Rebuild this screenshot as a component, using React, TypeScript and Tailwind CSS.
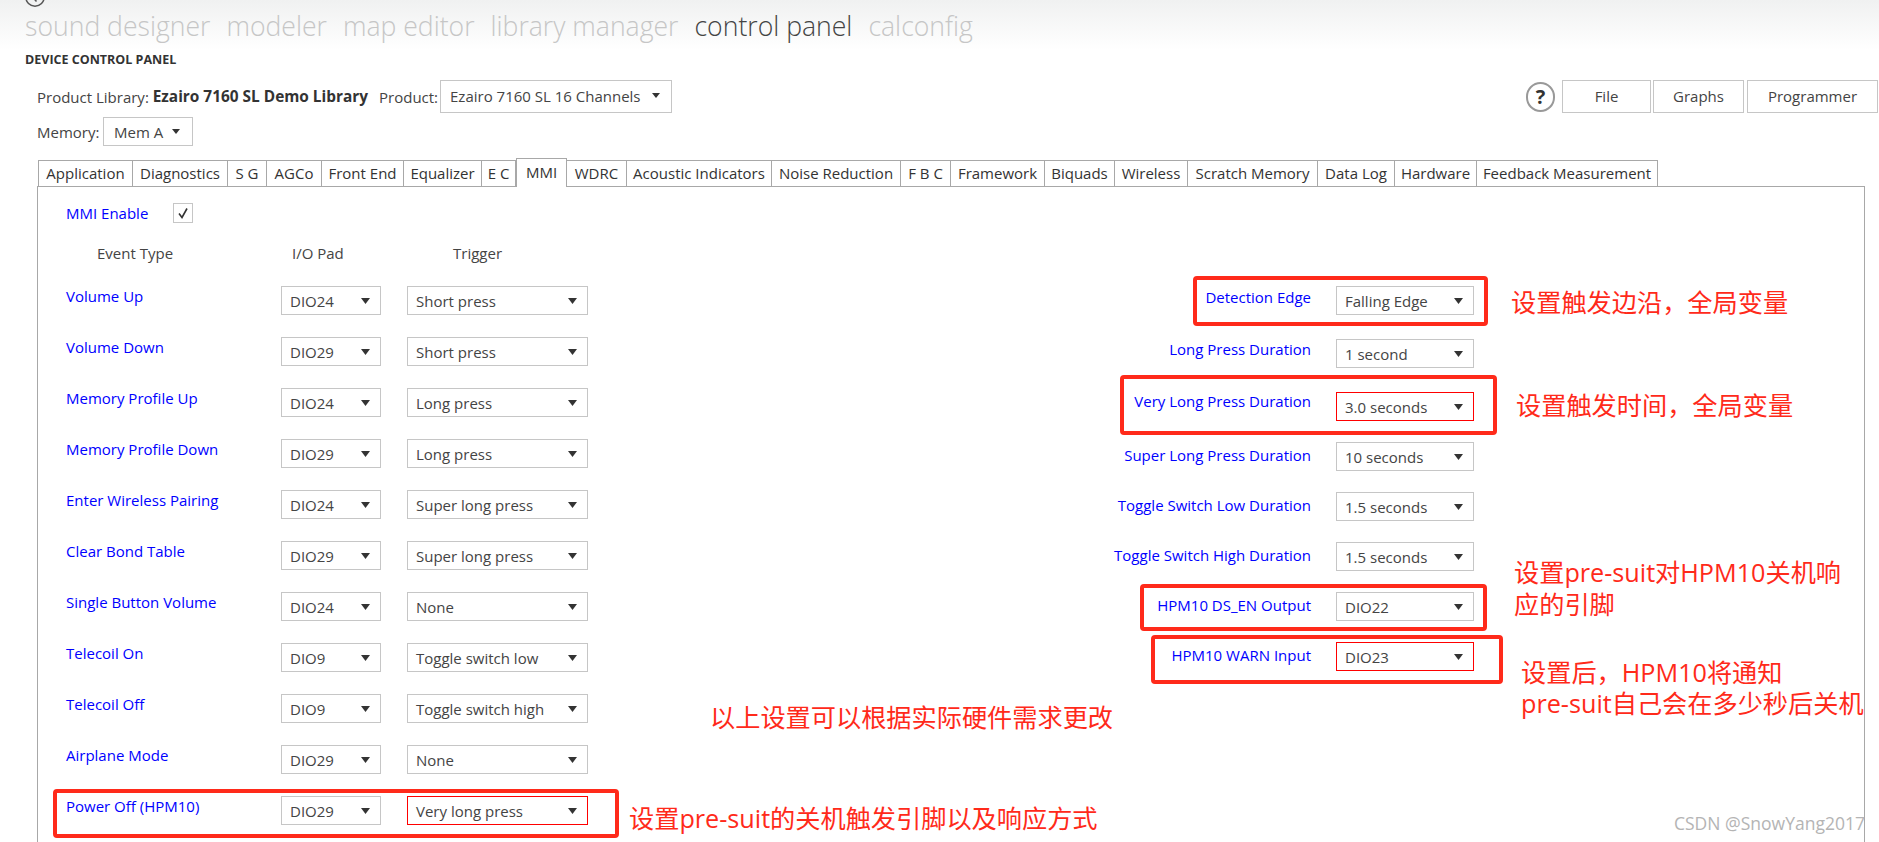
const headerTabs = [
  { label: "sound designer" },
  { label: "modeler" },
  { label: "map editor" },
  { label: "library manager" },
  { label: "control panel", active: true },
  { label: "calconfig" },
];

const tabs = [
  { label: "Application", w: "w-[95px]" },
  { label: "Diagnostics", w: "w-[95px]" },
  { label: "S G", w: "w-[39px]" },
  { label: "AGCo", w: "w-[55px]" },
  { label: "Front End", w: "w-[82px]" },
  { label: "Equalizer", w: "w-[78px]" },
  { label: "E C", w: "w-[34px]" },
  { label: "MMI", w: "w-[51px]", active: true },
  { label: "WDRC", w: "w-[60px]" },
  { label: "Acoustic Indicators", w: "w-[145px]" },
  { label: "Noise Reduction", w: "w-[129px]" },
  { label: "F B C", w: "w-[50px]" },
  { label: "Framework", w: "w-[94px]" },
  { label: "Biquads", w: "w-[70px]" },
  { label: "Wireless", w: "w-[73px]" },
  { label: "Scratch Memory", w: "w-[130px]" },
  { label: "Data Log", w: "w-[77px]" },
  { label: "Hardware", w: "w-[82px]" },
  { label: "Feedback Measurement", w: "w-[181px]" },
];

const events = [
  { label: "Volume Up", pad: "DIO24", trigger: "Short press" },
  { label: "Volume Down", pad: "DIO29", trigger: "Short press" },
  { label: "Memory Profile Up", pad: "DIO24", trigger: "Long press" },
  { label: "Memory Profile Down", pad: "DIO29", trigger: "Long press" },
  { label: "Enter Wireless Pairing", pad: "DIO24", trigger: "Super long press" },
  { label: "Clear Bond Table", pad: "DIO29", trigger: "Super long press" },
  { label: "Single Button Volume", pad: "DIO24", trigger: "None" },
  { label: "Telecoil On", pad: "DIO9", trigger: "Toggle switch low" },
  { label: "Telecoil Off", pad: "DIO9", trigger: "Toggle switch high" },
  { label: "Airplane Mode", pad: "DIO29", trigger: "None" },
  { label: "Power Off (HPM10)", pad: "DIO29", trigger: "Very long press", changed: true },
];

const globals = [
  { label: "Detection Edge", value: "Falling Edge", gap: "mb-[24px]", lift: "pb-[8px]" },
  { label: "Long Press Duration", value: "1 second", gap: "mb-[24px]", lift: "pb-[10px]" },
  { label: "Very Long Press Duration", value: "3.0 seconds", gap: "mb-[21px]", lift: "pb-[11px]", changed: true },
  { label: "Super Long Press Duration", value: "10 seconds", gap: "mb-[21px]", lift: "pb-[4px]" },
  { label: "Toggle Switch Low Duration", value: "1.5 seconds", gap: "mb-[21px]", lift: "pb-[4px]" },
  { label: "Toggle Switch High Duration", value: "1.5 seconds", gap: "mb-[21px]", lift: "pb-[4px]" },
  { label: "HPM10 DS_EN Output", value: "DIO22", gap: "mb-[21px]", lift: "pb-[4px]" },
  { label: "HPM10 WARN Input", value: "DIO23", gap: "mb-[21px]", lift: "pb-[4px]", changed: true },
];

const redBoxes = [
  "left-[53px] top-[789px] w-[566px] h-[49px]",
  "left-[1193px] top-[276px] w-[295px] h-[50px]",
  "left-[1120px] top-[375px] w-[377px] h-[60px]",
  "left-[1140px] top-[584px] w-[347px] h-[47px]",
  "left-[1151px] top-[635px] w-[352px] h-[49px]",
];

const notes = [
  { text: "设置触发边沿\uFF0C全局变量", pos: "left-[1511px] top-[284px]" },
  { text: "设置触发时间\uFF0C全局变量", pos: "left-[1516px] top-[387px]" },
  { text: "设置pre-suit对HPM10关机响", pos: "left-[1514px] top-[554px]" },
  { text: "应的引脚", pos: "left-[1514px] top-[586px]" },
  { text: "设置后\uFF0CHPM10将通知", pos: "left-[1521px] top-[654px]" },
  { text: "pre-suit自己会在多少秒后关机", pos: "left-[1521px] top-[685px]" },
  { text: "以上设置可以根据实际硬件需求更改", pos: "left-[710px] top-[699px]" },
  { text: "设置pre-suit的关机触发引脚以及响应方式", pos: "left-[629px] top-[800px]" },
];

function Arrow() {
  return (
    <svg width="9" height="6" viewBox="0 0 9 6" className="shrink-0">
      <polygon points="0,0 9,0 4.5,6" fill="#333" />
    </svg>
  );
}

function Select({
  value,
  width,
  changed,
}: {
  value: string;
  width: string;
  changed?: boolean;
}) {
  return (
    <div
      className={`${width} flex h-[29px] shrink-0 items-center justify-between border bg-white pl-[8px] pr-[10px] text-[#444] ${
        changed ? "border-[#ff0000]" : "border-[#c6c6c6]"
      }`}
    >
      <span>{value}</span>
      <Arrow />
    </div>
  );
}

function App() {
  return (
    <div className="relative h-[842px] w-[1879px] overflow-hidden bg-white font-['Open_Sans','Noto_Sans_CJK_SC',sans-serif] text-[15px] leading-[20px] text-[#444]">
      {/* top nav */}
      <div className="relative h-[50px] bg-gradient-to-b from-[#f0f1f1] to-white pl-[25px] pt-[10px]">
        <svg
          className="absolute left-[25px] top-[-13px]"
          width="20"
          height="20"
          viewBox="0 0 20 20"
          fill="none"
          stroke="#555"
          strokeWidth="1.5"
        >
          <circle cx="10" cy="10" r="9.2" />
          <path d="M11.5 14.5 L7.5 10 L11.5 5.5" />
        </svg>
        <div className="flex gap-[16px] text-[26.6px] font-light leading-[32px]">
          {headerTabs.map((t) => (
            <span key={t.label} className={t.active ? "text-[#444]" : "text-[#c6c6c6]"}>
              {t.label}
            </span>
          ))}
        </div>
      </div>

      <div className="h-[30px] pl-[25px] pt-[1px] text-[12.5px] font-bold leading-[18px] text-[#333]">
        DEVICE CONTROL PANEL
      </div>

      {/* product row */}
      <div className="flex h-[33px] items-center justify-between pl-[37px] pr-[1px]">
        <div className="flex items-center">
          <span>Product Library:&nbsp;</span>
          <span className="text-[15.4px] font-bold text-[#333]">Ezairo 7160 SL Demo Library</span>
          <span className="ml-[11px] w-[61px]">Product:</span>
          <div className="flex h-[33px] w-[232px] items-center border border-[#c6c6c6] pb-[2px] pl-[9px]">
            <span>Ezairo 7160 SL 16 Channels</span>
            <svg className="ml-[11px]" width="8" height="5" viewBox="0 0 8 5">
              <polygon points="0,0 8,0 4,5" fill="#333" />
            </svg>
          </div>
        </div>
        <div className="flex items-center">
          <div className="mr-[7px] flex h-[30px] w-[29px] items-center justify-center rounded-full border-2 border-[#999] text-[20px] font-bold leading-none text-[#333]">
            ?
          </div>
          <div className="flex h-[33px] w-[89px] items-center justify-center border border-[#c6c6c6] pb-[2px]">File</div>
          <div className="ml-[2px] flex h-[33px] w-[91px] items-center justify-center border border-[#c6c6c6] pb-[2px]">Graphs</div>
          <div className="ml-[3px] flex h-[33px] w-[131px] items-center justify-center border border-[#c6c6c6] pb-[2px]">Programmer</div>
        </div>
      </div>

      {/* memory row */}
      <div className="mt-[4px] flex h-[29px] items-center pl-[37px]">
        <span className="w-[66px]">Memory:</span>
        <div className="flex h-[29px] w-[90px] items-center border border-[#c6c6c6] pl-[10px]">
          <span>Mem A</span>
          <svg className="ml-[9px]" width="8" height="5" viewBox="0 0 8 5">
            <polygon points="0,0 8,0 4,5" fill="#333" />
          </svg>
        </div>
      </div>

      {/* tabs */}
      <div className="mt-[12px] flex h-[28px] items-end pl-[38px]">
        {tabs.map((t) => (
          <div
            key={t.label}
            className={`${t.w} relative flex shrink-0 items-center justify-center whitespace-nowrap border-r border-t border-[#a8a8a8] pb-[2px] first:border-l ${
              t.active
                ? "z-10 -mb-[1px] h-[29px] border-l bg-white text-[#333]"
                : "h-[26px] text-[#333]"
            }`}
          >
            {t.label}
          </div>
        ))}
      </div>

      {/* panel */}
      <div className="ml-[37px] h-[700px] w-[1828px] border border-[#a8a8a8] pl-[28px]">
        <div className="mt-[16px] flex h-[20px] items-center">
          <span className="w-[107px] text-[#0000ff]">MMI Enable</span>
          <div className="flex h-[20px] w-[20px] items-center justify-center border border-[#c6c6c6]">
            <svg width="12" height="12" viewBox="0 0 12 12" fill="none" stroke="#333" strokeWidth="1.6">
              <path d="M2 6.5 L5 10.5 L10 1.5" />
            </svg>
          </div>
        </div>

        <div className="mt-[20px] flex h-[20px] items-center">
          <span className="ml-[31px] w-[195px]">Event Type</span>
          <span className="w-[161px]">I/O Pad</span>
          <span>Trigger</span>
        </div>

        <div className="mt-[23px] flex items-start justify-between pr-[390px]">
          <div className="flex flex-col gap-[22px]">
            {events.map((e) => (
              <div key={e.label} className="flex h-[29px] items-center">
                <span className="w-[215px] pb-[10px] text-[#0000ff]">{e.label}</span>
                <Select value={e.pad} width="w-[100px]" />
                <div className="w-[26px]" />
                <Select value={e.trigger} width="w-[181px]" changed={e.changed} />
              </div>
            ))}
          </div>

          <div className="flex flex-col items-end">
            {globals.map((g) => (
              <div key={g.label} className={`flex h-[29px] items-center ${g.gap}`}>
                <span className={`mr-[25px] text-right text-[#0000ff] ${g.lift}`}>{g.label}</span>
                <Select value={g.value} width="w-[138px]" changed={g.changed} />
              </div>
            ))}
          </div>
        </div>
      </div>

      {/* hand drawn annotations on top of the screenshot */}
      {redBoxes.map((pos) => (
        <div key={pos} className={`absolute ${pos} rounded-[4px] border-[4px] border-[#ff2a1a]`} />
      ))}
      {notes.map((n) => (
        <div
          key={n.text}
          className={`absolute ${n.pos} whitespace-nowrap text-[25.2px] leading-[36px] text-[#ff2a1a]`}
        >
          {n.text}
        </div>
      ))}
      <div className="absolute left-[1674px] top-[810px] text-[17.5px] leading-[26px] text-[#b4b4b4]">
        CSDN @SnowYang2017
      </div>
    </div>
  );
}

export default App;
